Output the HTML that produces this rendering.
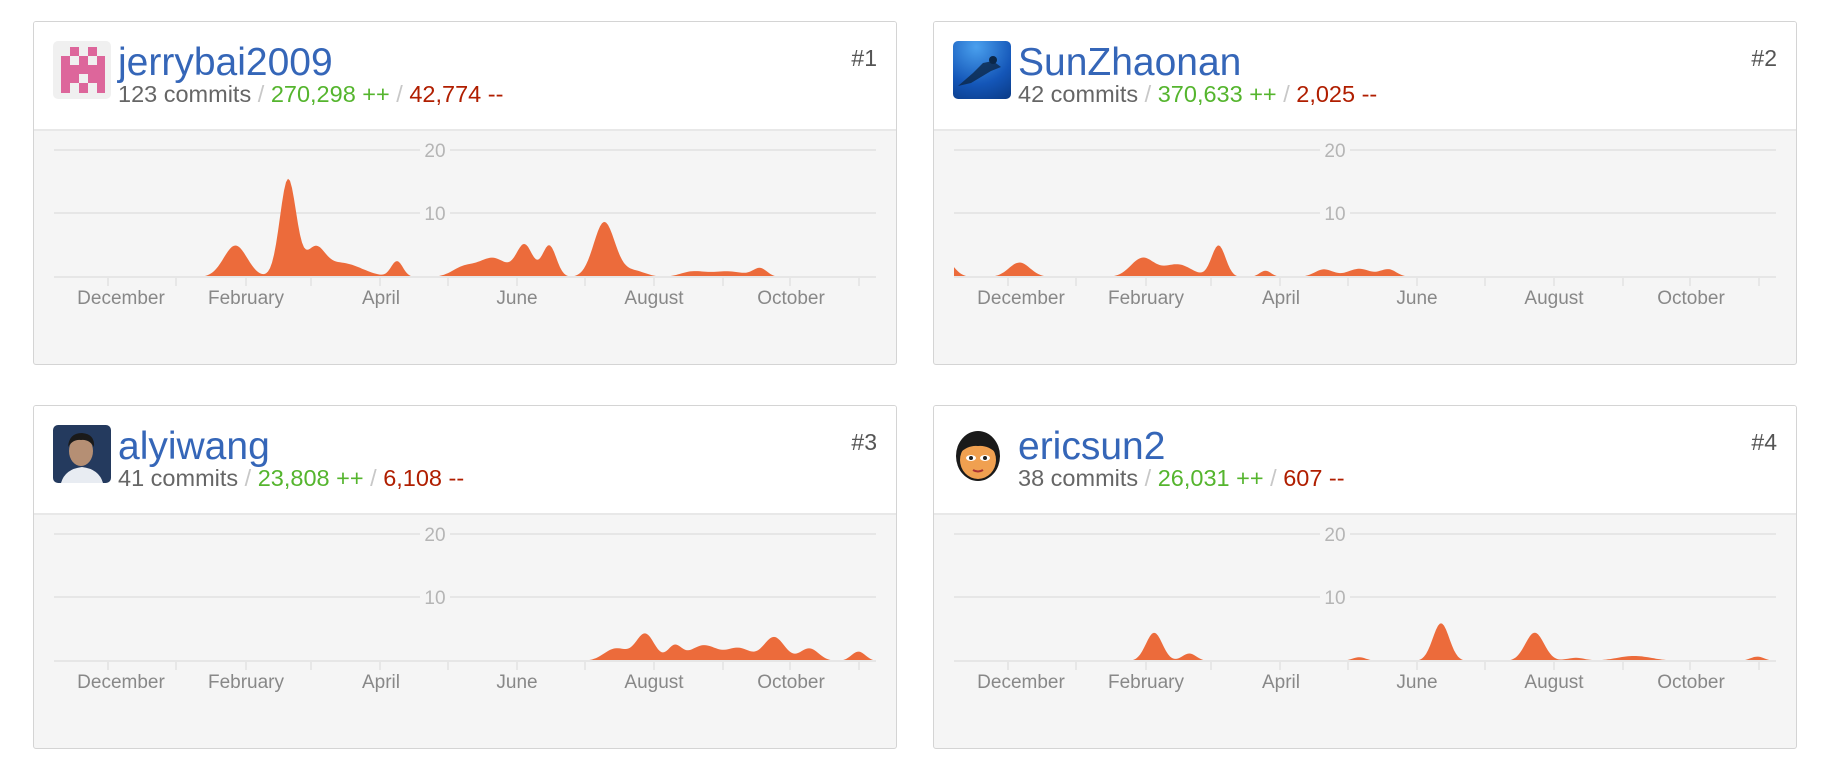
<!DOCTYPE html>
<html><head><meta charset="utf-8"><style>
body{margin:0;width:1836px;height:772px;background:#fff;font-family:"Liberation Sans",sans-serif;position:relative;overflow:hidden}
.card{position:absolute;width:862px;height:342px;border:1px solid #d4d4d4;border-radius:3px;background:#f5f5f5;overflow:hidden}
.hd{position:absolute;left:0;top:0;width:862px;height:107px;background:#fff;border-bottom:2px solid #e8e8e8}
.av{position:absolute;left:19px;top:19px;width:58px;height:58px;border-radius:5px;overflow:hidden}
.nm{position:absolute;left:84px;top:21px;font-size:39px;line-height:39px;color:#3566b8;white-space:nowrap}
.st{position:absolute;left:84px;top:61px;font-size:23.5px;line-height:23.5px;color:#666;white-space:nowrap}
.st .g{color:#55b52e}.st .r{color:#b01e00}.st .s{color:#c8c8c8}
.rk{position:absolute;right:19px;top:25px;font-size:23px;line-height:23px;color:#555}
svg.ch{position:absolute;left:0;top:0}
</style></head><body>

<div class="card" style="left:33px;top:21px"><svg class="ch" id="c1" width="862" height="342"></svg>
<div class="hd"><div class="av" style="background:#f0f0f0"><svg width="58" height="58" viewBox="0 0 58 58">
<g fill="#dd669b">
<rect x="17" y="6" width="9" height="9"/><rect x="35" y="6" width="9" height="9"/>
<rect x="8" y="15" width="9" height="9"/><rect x="26" y="15" width="9" height="9"/><rect x="44" y="15" width="8" height="9"/>
<rect x="8" y="24" width="44" height="9"/>
<rect x="8" y="33" width="18" height="9"/><rect x="35" y="33" width="17" height="9"/>
<rect x="8" y="42" width="9" height="10"/><rect x="26" y="42" width="9" height="10"/><rect x="44" y="42" width="8" height="10"/>
</g></svg></div>
<div class="nm">jerrybai2009</div><div class="st">123 commits <span class="s">/</span> <span class="g">270,298 ++</span> <span class="s">/</span> <span class="r">42,774 --</span></div><div class="rk">#1</div></div></div>

<div class="card" style="left:933px;top:21px"><svg class="ch" id="c2" width="862" height="342"></svg>
<div class="hd"><div class="av" style="background:radial-gradient(circle at 40% 10%,#4aa0ee,#1456b8 60%,#0a3a85)"><svg width="58" height="58"><path d="M5 45 L20 32 L30 22 L40 20 L48 26 L38 30 L28 36 L18 42 Z" fill="#0b2748" opacity=".8"/><circle cx="40" cy="19" r="4" fill="#0b2748"/></svg></div>
<div class="nm">SunZhaonan</div><div class="st">42 commits <span class="s">/</span> <span class="g">370,633 ++</span> <span class="s">/</span> <span class="r">2,025 --</span></div><div class="rk">#2</div></div></div>

<div class="card" style="left:33px;top:405px"><svg class="ch" id="c3" width="862" height="342"></svg>
<div class="hd"><div class="av" style="background:#243a5e"><svg width="58" height="58"><path d="M8 58 Q12 44 29 42 Q46 44 50 58 Z" fill="#e8ecf2"/><ellipse cx="28" cy="26" rx="12" ry="15" fill="#b58f74"/><path d="M15 22 Q16 8 29 8 Q42 9 41 22 Q36 14 28 15 Q20 14 15 22Z" fill="#1a1a1a"/></svg></div>
<div class="nm">alyiwang</div><div class="st">41 commits <span class="s">/</span> <span class="g">23,808 ++</span> <span class="s">/</span> <span class="r">6,108 --</span></div><div class="rk">#3</div></div></div>

<div class="card" style="left:933px;top:405px"><svg class="ch" id="c4" width="862" height="342"></svg>
<div class="hd"><div class="av" style="border-radius:0"><svg width="58" height="58"><ellipse cx="25" cy="31" rx="22" ry="25" fill="#1a1a1a"/><ellipse cx="25" cy="35" rx="18" ry="19" fill="#f0a050"/><path d="M7 28 Q8 12 25 12 Q42 12 43 28 Q35 20 25 21 Q15 20 7 28Z" fill="#1a1a1a"/><ellipse cx="18" cy="33" rx="5" ry="3" fill="#fff"/><ellipse cx="32" cy="33" rx="5" ry="3" fill="#fff"/><circle cx="18" cy="33" r="2" fill="#222"/><circle cx="32" cy="33" r="2" fill="#222"/><path d="M20 45 Q25 48 30 45" stroke="#a33" stroke-width="2" fill="none"/></svg></div>
<div class="nm">ericsun2</div><div class="st">38 commits <span class="s">/</span> <span class="g">26,031 ++</span> <span class="s">/</span> <span class="r">607 --</span></div><div class="rk">#4</div></div></div>

<script>
var S=1.171;
var data={
c1:[28,[[200,5,10],[245,15.5,7],[268,4,8],[285,1.5,15],[300,1,15],[338,2.5,5],[395,1.5,10],[420,3,12],[447,5,7],[468,5,6],[515,8.7,9],[540,1,10],[590,0.8,10],[620,0.9,15],[648,1.3,6]]],
c2:[797,[[805,3,8],[870,2.3,9],[975,3,10],[1005,2,12],[1040,5,6],[1080,1,5],[1130,1.2,8],[1160,1.3,10],[1185,1.2,7]]],
c3:[28,[[525,2,10],[550,4.3,8],[575,2.3,6],[600,2.5,12],[630,2,10],[660,3.8,9],[690,2,8],[732,1.5,6]]],
c4:[797,[[985,4.5,7],[1015,1.2,6],[1160,0.6,6],[1230,6,7],[1310,4.5,8],[1345,0.5,8],[1395,0.8,15],[1500,0.7,6]]]};
var ticks=[74,142,212,277,346,414,483,551,620,689,756,825];
var months=[["December",87],["February",212],["April",347],["June",483],["August",620],["October",757]];
for(var id in data){
 var svg=document.getElementById(id),L=data[id][0],B=data[id][1],h='';
 h+='<line x1="20" y1="128" x2="842" y2="128" stroke="#e6e6e6" stroke-width="2"/>';
 h+='<line x1="20" y1="191" x2="842" y2="191" stroke="#e6e6e6" stroke-width="2"/>';
 var d='M20 255';
 for(var x=20;x<=842;x+=2){var v=0;for(var i=0;i<B.length;i++){var bx=(B[i][0]-L)*S,s=B[i][2]*S;v+=B[i][1]*Math.exp(-Math.pow(x-bx,2)/(2*s*s));}
  d+=' L'+x+' '+(255-v*6.3).toFixed(1);}
 d+=' L842 255 Z';
 h+='<path d="'+d+'" fill="#ec6b3b"/>';
 h+='<line x1="20" y1="255" x2="842" y2="255" stroke="#e6e6e6" stroke-width="2"/>';
 ticks.forEach(function(t){h+='<line x1="'+t+'" y1="256" x2="'+t+'" y2="264" stroke="#e2e2e2" stroke-width="1.5"/>';});
 h+='<rect x="386" y="118" width="30" height="20" fill="#f5f5f5"/><rect x="386" y="181" width="30" height="20" fill="#f5f5f5"/>';
 h+='<text x="401" y="135" text-anchor="middle" font-size="19" fill="#b5b5b5" font-family="Liberation Sans">20</text>';
 h+='<text x="401" y="198" text-anchor="middle" font-size="19" fill="#b5b5b5" font-family="Liberation Sans">10</text>';
 months.forEach(function(m){h+='<text x="'+m[1]+'" y="282" text-anchor="middle" font-size="19" fill="#888" font-family="Liberation Sans">'+m[0]+'</text>';});
 svg.innerHTML=h;
}
</script>
</body></html>
